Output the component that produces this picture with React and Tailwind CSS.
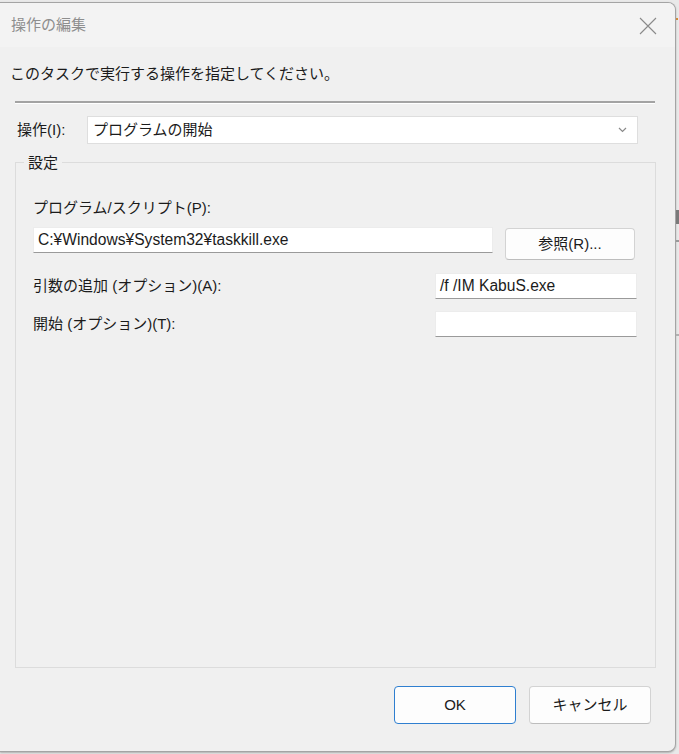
import React from "react";

const font = { fontFamily: '"Liberation Sans", "Noto Sans CJK JP", sans-serif' };

function TextBox({ value, className = "" }) {
    return (
        <div className={`h-[26px] bg-white border border-[#ececec] border-b-[#9a9a9a] flex items-center px-[4px] text-[15.6px] text-[#1b1b1b] ${className}`}>
            {value}
        </div>
    );
}

export default function App() {
    return (
        <div className="w-[679px] h-[754px] bg-[#e9e9e9] flex overflow-hidden" style={font}>
            <div className="w-[676px] h-[750px] mt-[2px] shrink-0 border-t border-r border-b border-[#a4a4a4] rounded-tr-[8px] rounded-br-[8px] bg-[#f0f0f0] flex flex-col overflow-hidden shadow-[0_1px_2px_rgba(0,0,0,0.25)]">
                {/* title bar */}
                <div className="h-[44px] shrink-0 bg-[#f3f3f3] flex items-center justify-between pl-[11px] pr-[18px]">
                    <span className="text-[15px] text-[#8e8e8e]">操作の編集</span>
                    <svg width="18" height="18" viewBox="0 0 18 18" className="mt-[1px]">
                        <path d="M1 1L17 17M17 1L1 17" stroke="#8a8a8a" strokeWidth="1.1" fill="none" />
                    </svg>
                </div>

                <p className="mt-[17px] ml-[10px] text-[15px] leading-[20px] text-[#1b1b1b]">このタスクで実行する操作を指定してください。</p>

                <div className="mt-[17px] ml-[15px] w-[640px] h-[2px] border-t-2 border-[#a3a3a3] border-b border-b-white" />

                <div className="mt-[12px] flex items-center h-[28px]">
                    <span className="ml-[17px] w-[70px] text-[15px] text-[#1b1b1b]">操作(I):</span>
                    <div className="w-[551px] h-[28px] bg-white border border-[#dedede] flex items-center justify-between pl-[5px] pr-[10px] text-[15px] text-[#1b1b1b]">
                        <span>プログラムの開始</span>
                        <svg width="9" height="6" viewBox="0 0 9 6">
                            <path d="M1 1L4.5 4.5L8 1" stroke="#8a8a8a" strokeWidth="1.2" fill="none" />
                        </svg>
                    </div>
                </div>

                {/* 設定 group */}
                <div className="relative mt-[18px] ml-[15px] w-[641px] h-[506px] border border-[#dcdcdc] flex flex-col pl-[17px]">
                    <span className="absolute -top-[10px] left-[8px] px-[4px] bg-[#f0f0f0] text-[15px] leading-[20px] text-[#1b1b1b]">設定</span>

                    <span className="mt-[35px] text-[15px] leading-[20px] text-[#1b1b1b]">プログラム/スクリプト(P):</span>
                    <div className="mt-[9px] flex items-start gap-[12px]">
                        <TextBox value="C:¥Windows¥System32¥taskkill.exe" className="w-[460px]" />
                        <button className="mt-[1px] w-[130px] h-[32px] bg-[#fdfdfd] border border-[#d3d3d3] border-b-[#bdbdbd] rounded-[4px] text-[15px] text-[#1b1b1b]">参照(R)...</button>
                    </div>

                    <div className="mt-[13px] flex items-center">
                        <span className="w-[402px] text-[15px] text-[#1b1b1b]">引数の追加 (オプション)(A):</span>
                        <TextBox value="/f /IM KabuS.exe" className="w-[202px]" />
                    </div>
                    <div className="mt-[12px] flex items-center">
                        <span className="w-[402px] text-[15px] text-[#1b1b1b]">開始 (オプション)(T):</span>
                        <TextBox value="" className="w-[202px]" />
                    </div>
                </div>

                <div className="mt-[18px] flex justify-end gap-[13px] pr-[24px]">
                    <button className="w-[122px] h-[38px] bg-[#fdfdfd] border-[1.5px] border-[#2f7fd0] rounded-[4px] text-[15px] text-[#1b1b1b]">OK</button>
                    <button className="w-[122px] h-[38px] bg-[#fdfdfd] border border-[#d3d3d3] border-b-[#bdbdbd] rounded-[4px] text-[15px] text-[#1b1b1b]">キャンセル</button>
                </div>
            </div>

            {/* sliver of the window behind */}
            <div className="flex-1 flex flex-col">
                <div className="h-[18px]" />
                <div className="h-[2px] w-[2px] bg-[#d08a3a]" />
                <div className="h-[190px]" />
                <div className="h-[14px] bg-[#7a7a7a]" />
                <div className="h-[16px]" />
                <div className="h-[2px] bg-[#9a9a9a]" />
                <div className="h-[92px]" />
                <div className="h-[2px] bg-[#b0b0b0]" />
            </div>
        </div>
    );
}
